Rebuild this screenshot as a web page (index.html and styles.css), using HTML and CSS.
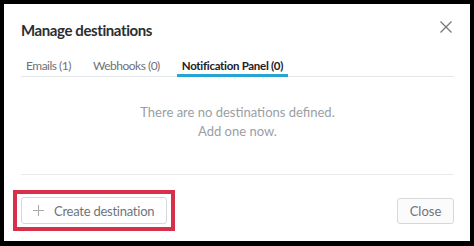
FILE: index.html
```html
<!DOCTYPE html>
<html>
<head>
<meta charset="utf-8">
<link rel="stylesheet" href="styles.css">
</head>
<body>
<div class="panel">
  <div class="header">
    <div class="title">Manage destinations</div>
    <button class="close-x" aria-label="Close">
      <svg width="12" height="12" viewBox="0 0 12 12"><path d="M0.5 0.5 L11.5 11.5 M11.5 0.5 L0.5 11.5" stroke="#707479" stroke-width="1.2" fill="none"/></svg>
    </button>
  </div>
  <div class="tabs">
    <div class="tab">Emails (1)</div>
    <div class="tab">Webhooks (0)</div>
    <div class="tab active">Notification Panel (0)</div>
  </div>
  <div class="content">
    <div class="empty">There are no destinations defined.<br>Add one now.</div>
  </div>
  <div class="footer">
    <div class="highlight">
      <button class="btn create">
        <svg class="plus" width="11" height="11" viewBox="0 0 11 11"><path d="M5.5 0 V11 M0 5.5 H11" stroke="#a8acb1" stroke-width="1.1" fill="none"/></svg>
        <span>Create destination</span>
      </button>
    </div>
    <button class="btn close">Close</button>
  </div>
</div>
</body>
</html>
```
FILE: styles.css
```css
html, body {
  margin: 0;
  padding: 0;
  background: #000;
}
body {
  width: 474px;
  height: 246px;
  overflow: hidden;
  font-family: Lato, "Noto Sans", sans-serif;
}
.panel {
  margin: 4px 4px 0 4px;
  width: 466px;
  height: 237px;
  background: #fff;
  box-sizing: border-box;
  padding: 0 16px 0 17px;
}
.header {
  display: flex;
  justify-content: space-between;
  align-items: flex-start;
  padding-top: 14px;
  height: 24px;
}
.title {
  font-size: 15px;
  font-weight: 700;
  letter-spacing: -0.4px;
  line-height: 24px;
  color: #2b2d30;
}
.close-x {
  border: 0;
  background: none;
  padding: 0;
  margin: 3px 2px 0 0;
  width: 12px;
  height: 12px;
  display: flex;
}
.tabs {
  display: flex;
  gap: 12px;
  margin-top: 16px;
  border-bottom: 1px solid #e4e7ea;
}
.tab {
  font-size: 12px;
  letter-spacing: -0.5px;
  line-height: 16px;
  padding: 0 5px;
  color: #6e7278;
  border-bottom: 3px solid transparent;
  margin-bottom: -1px;
}
.tab.active {
  font-size: 11.5px;
  letter-spacing: -0.3px;
  font-weight: 700;
  color: #222;
  border-bottom-color: #27a3d4;
}
.content {
  height: 98px;
  box-sizing: border-box;
  padding-top: 26px;
  border-bottom: 1px solid #e8eaec;
}
.empty {
  text-align: center;
  font-size: 13px;
  line-height: 19px;
  color: #9a9ea4;
}
.footer {
  display: flex;
  justify-content: space-between;
  align-items: center;
  padding-top: 15px;
}
.highlight {
  margin-left: -8px;
  border: 4px solid #d8304b;
  padding: 3px 4px;
}
.btn {
  font-family: Lato, "Noto Sans", sans-serif;
  font-size: 13px;
  color: #6f747a;
  background: #fff;
  border: 1px solid #d6d9dc;
  border-radius: 3px;
  height: 27px;
  box-sizing: border-box;
  display: flex;
  align-items: center;
  padding: 0;
}
.create {
  width: 146px;
  padding-left: 11px;
  gap: 10px;
  letter-spacing: -0.25px;
}
.close {
  width: 57px;
  height: 26px;
  justify-content: center;
  background: #fbfbfb;
}
```
